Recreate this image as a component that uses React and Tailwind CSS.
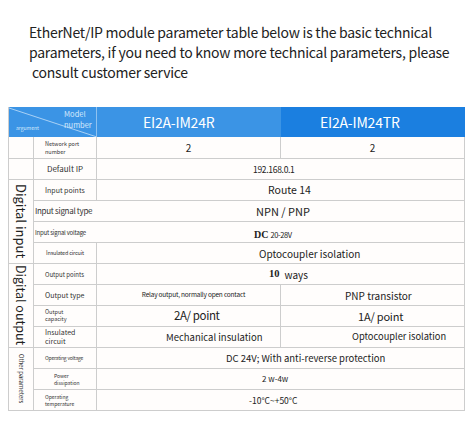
const font = { fontFamily: '"Noto Sans CJK SC", "Noto Sans", sans-serif' };
const serif = { fontFamily: '"Liberation Serif", serif' };

function Label({ children, className = "" }) {
  return (
    <div className={`flex items-center border-r border-b border-[#cdcdcd] text-[#333] whitespace-nowrap ${className}`}>
      {children}
    </div>
  );
}

function Val({ children, className = "" }) {
  return (
    <div className={`flex items-center border-r border-b border-[#cdcdcd] text-[#222] whitespace-nowrap ${className}`}>
      {children}
    </div>
  );
}

export default function App() {
  return (
    <div className="w-[474px] h-[436px] bg-white overflow-hidden" style={font}>
      <div className="pt-[22px] pl-[29px] text-[14px] leading-[20px] text-[#222] tracking-[-0.25px] whitespace-nowrap">
        <p>EtherNet/IP module parameter table below is the basic technical</p>
        <p>parameters, if you need to know more technical parameters, please</p>
        <p className="pl-[3px]">consult customer service</p>
      </div>

      <div className="mt-[25px] ml-[8px] w-[456px] grid grid-cols-[25px_63px_184px_184px] grid-rows-[30px_22px_repeat(12,21px)] border-l border-[#cdcdcd] bg-[#fffdfc]">
        {/* header */}
        <div className="col-span-2 relative bg-[#3b94e5] border-r border-[#8fc2f0] overflow-hidden">
          <svg className="absolute inset-0" width="88" height="30">
            <line x1="0" y1="1" x2="88" y2="30" stroke="#a9d1f5" strokeWidth="1" />
          </svg>
          <div className="absolute left-[55px] top-[1px] text-[7.5px] leading-[11px] text-[#d6eafc]">
            <div>Model</div>
            <div>number</div>
          </div>
          <div className="absolute left-[7px] top-[17px] text-[5px] text-[#d6eafc]">argument</div>
        </div>
        <div className="bg-[#3b94e5] flex items-center pl-[46px] text-white text-[14px] tracking-[-0.2px]">EI2A-IM24R</div>
        <div className="bg-[#1b7fe0] flex items-center pl-[39px] text-white text-[14px] tracking-[-0.2px]">EI2A-IM24TR</div>

        {/* network port */}
        <div className="border-r border-b border-[#cdcdcd]" />
        <Label className="pl-[11px] text-[5.5px] leading-[8px]">
          <div>Network port<br />number</div>
        </Label>
        <Val className="justify-center text-[10px]">2</Val>
        <Val className="justify-center text-[10px]">2</Val>

        {/* default IP */}
        <div className="border-r border-b border-[#cdcdcd]" />
        <Label className="justify-center text-[8px]">Default IP</Label>
        <Val className="col-span-2 pl-[156px] text-[8.5px] tracking-[-0.3px]">192.168.0.1</Val>

        {/* digital input group */}
        <div className="row-span-4 border-r border-b border-[#cdcdcd] flex items-center justify-center">
          <span className="[writing-mode:vertical-rl] text-[13px] text-[#222]">Digital input</span>
        </div>
        <Label className="pl-[11px] text-[7px]">Input points</Label>
        <Val className="col-span-2 pl-[171px] text-[10.5px]">Route 14</Val>

        <Label className="pl-[2px] text-[8px] tracking-[-0.3px] border-r-0 -ml-px">Input signal type</Label>
        <Val className="col-span-2 pl-[159px] text-[11px]">NPN / PNP</Val>

        <Label className="pl-[2px] text-[6px] tracking-[-0.2px] border-r-0 -ml-px">Input signal voltage</Label>
        <Val className="col-span-2 pl-[157px] items-baseline pt-[5px]">
          <span className="font-bold text-[10px]" style={serif}>DC</span>
          <span className="text-[7.5px] ml-[2px] tracking-[-0.4px]">20-28V</span>
        </Val>

        <Label className="justify-center text-[5.5px] tracking-[-0.2px]">Insulated circuit</Label>
        <Val className="col-span-2 pl-[162px] text-[10px]">Optocoupler isolation</Val>

        {/* digital output group */}
        <div className="row-span-4 border-r border-b border-[#cdcdcd] flex items-center justify-center">
          <span className="[writing-mode:vertical-rl] text-[12.5px] text-[#222]">Digital output</span>
        </div>
        <Label className="pl-[11px] text-[6px]">Output points</Label>
        <Val className="col-span-2 pl-[172px] items-center">
          <span className="font-bold text-[10.5px]" style={serif}>10</span>
          <span className="text-[10px] ml-[5px]">ways</span>
        </Val>

        <Label className="pl-[11px] text-[7px]">Output type</Label>
        <Val className="justify-center pl-[10px] text-[6.5px] tracking-[-0.2px]">Relay output, normally open contact</Val>
        <Val className="pl-[64px] text-[10px]">PNP transistor</Val>

        <Label className="pl-[11px] text-[5.5px] leading-[7px]">
          <div>Output<br />capacity</div>
        </Label>
        <Val className="pl-[77px] text-[11.5px] tracking-[-0.4px]">2A/ point</Val>
        <Val className="pl-[77px] text-[11px] tracking-[-0.2px]">1A/ point</Val>

        <Label className="pl-[11px] text-[7px] leading-[9px]">
          <div>Insulated<br />circuit</div>
        </Label>
        <Val className="pl-[69px] text-[9.5px]">Mechanical insulation</Val>
        <Val className="pl-[71px] text-[9.3px]">Optocoupler isolation</Val>

        {/* other parameters */}
        <div className="row-span-3 border-r border-b border-[#cdcdcd] flex items-center justify-center">
          <span className="[writing-mode:vertical-rl] text-[6px] text-[#333] whitespace-nowrap">Other parameters</span>
        </div>
        <Label className="pl-[11px] text-[5px] tracking-[-0.2px]">Operating voltage</Label>
        <Val className="col-span-2 pl-[129px] text-[9.5px]">DC 24V; With anti-reverse protection</Val>

        <Label className="pl-[20px] text-[5px] leading-[7px]">
          <div>Power<br />dissipation</div>
        </Label>
        <Val className="col-span-2 pl-[165px] text-[8px]">2 w-4w</Val>

        <Label className="pl-[11px] text-[5px] leading-[7px]">
          <div>Operating<br />temperature</div>
        </Label>
        <Val className="col-span-2 pl-[152px] text-[8.5px]">-10°C~+50°C</Val>
      </div>
    </div>
  );
}
